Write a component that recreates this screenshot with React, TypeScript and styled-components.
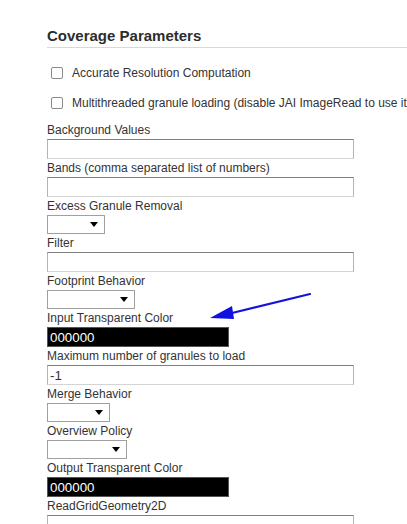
import React from 'react';
import styled, { createGlobalStyle } from 'styled-components';

const GlobalStyle = createGlobalStyle`
  html, body {
    margin: 0;
    padding: 0;
    background: #fff;
    overflow: hidden;
  }
  body {
    font-family: "Liberation Sans", Arial, sans-serif;
    color: #333;
  }
`;

const Page = styled.div`
  position: relative;
  width: 520px;
  padding: 27px 0 0 47px;
`;

const Heading = styled.h3`
  margin: 0;
  font-size: 15px;
  font-weight: bold;
  line-height: 18px;
  padding-bottom: 2px;
  border-bottom: 1px solid #dedcb4;
  color: #2d2d2d;
`;

const CheckList = styled.div`
  padding-top: 10px;
  margin-bottom: 3px;
`;

const CheckRow = styled.label`
  display: flex;
  align-items: center;
  height: 30px;
  padding-left: 4px;
  font-size: 12px;
  white-space: nowrap;
`;

const Check = styled.input`
  width: 12px;
  height: 12px;
  margin: 0 9px 0 0;
  appearance: none;
  border: 1px solid #8a8a8a;
  border-radius: 2px;
  background: #fff;
`;

const Field = styled.div`
  display: flex;
  flex-direction: column;
  align-items: flex-start;
`;

const Label = styled.label`
  font-size: 12px;
  line-height: 18px;
`;

const TextInput = styled.input<{ $dark?: boolean }>`
  box-sizing: border-box;
  width: ${p => (p.$dark ? '182px' : '307px')};
  height: 20px;
  margin: 0;
  padding: 1px 2px;
  font-family: "Liberation Sans", Arial, sans-serif;
  font-size: 13.333px;
  color: ${p => (p.$dark ? '#fff' : '#333')};
  background: ${p => (p.$dark ? '#000' : '#fff')};
  border: 1px solid;
  border-color: ${p =>
    p.$dark ? '#555' : '#7e7e7e #b4b4b4 #d4d4d4 #b4b4b4'};
  outline: none;
`;

const SelectBox = styled.div<{ $width: number }>`
  position: relative;
  box-sizing: border-box;
  width: ${p => p.$width}px;
  height: 19px;
  border: 1px solid #a0a0a0;
  background: #fff;

  &::after {
    content: '';
    position: absolute;
    right: 6px;
    top: 6px;
    border-left: 4px solid transparent;
    border-right: 4px solid transparent;
    border-top: 5px solid #000;
  }
`;

const Arrow = styled.svg`
  position: absolute;
  left: 0;
  top: 0;
  pointer-events: none;
`;

type Item =
  | { kind: 'text'; label: string; value?: string }
  | { kind: 'color'; label: string; value: string }
  | { kind: 'select'; label: string; width: number };

const items: Item[] = [
  { kind: 'text', label: 'Background Values' },
  { kind: 'text', label: 'Bands (comma separated list of numbers)' },
  { kind: 'select', label: 'Excess Granule Removal', width: 58 },
  { kind: 'text', label: 'Filter' },
  { kind: 'select', label: 'Footprint Behavior', width: 88 },
  { kind: 'color', label: 'Input Transparent Color', value: '000000' },
  { kind: 'text', label: 'Maximum number of granules to load', value: '-1' },
  { kind: 'select', label: 'Merge Behavior', width: 63 },
  { kind: 'select', label: 'Overview Policy', width: 80 },
  { kind: 'color', label: 'Output Transparent Color', value: '000000' },
  { kind: 'text', label: 'ReadGridGeometry2D' },
];

export default function App() {
  return (
    <>
      <GlobalStyle />
      <Page>
        <Heading>Coverage Parameters</Heading>
        <CheckList>
          <CheckRow>
            <Check type="checkbox" />
            Accurate Resolution Computation
          </CheckRow>
          <CheckRow>
            <Check type="checkbox" />
            Multithreaded granule loading (disable JAI ImageRead to use it)
          </CheckRow>
        </CheckList>
        {items.map(item => (
          <Field key={item.label}>
            <Label>{item.label}</Label>
            {item.kind === 'select' ? (
              <SelectBox $width={item.width} />
            ) : (
              <TextInput
                $dark={item.kind === 'color'}
                defaultValue={item.value || ''}
                readOnly={item.kind === 'color'}
              />
            )}
          </Field>
        ))}
        <Arrow width="407" height="524" viewBox="0 0 407 524">
          <line x1="310" y1="294" x2="228" y2="314" stroke="#1414d8" strokeWidth="2.2" strokeLinecap="round" />
          <polygon points="210,318 232,306 234,319" fill="#1010e0" />
        </Arrow>
      </Page>
    </>
  );
}
